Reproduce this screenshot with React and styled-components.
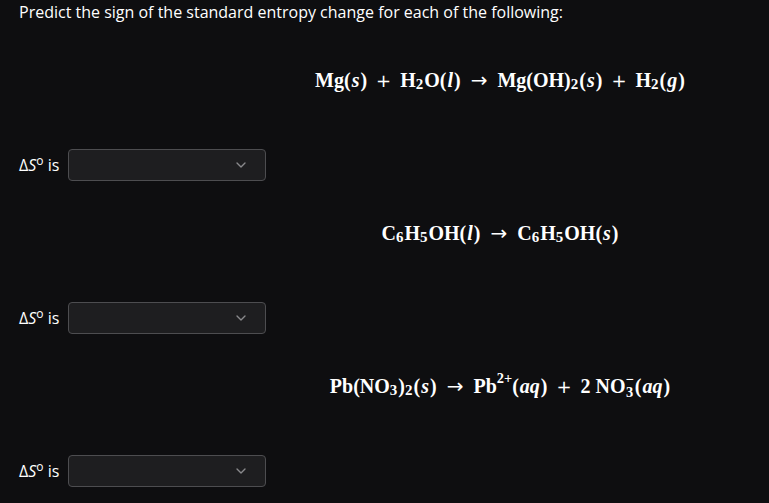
import React from "react";
import styled, { createGlobalStyle } from "styled-components";
import { ChevronDown } from "lucide-react";

const GlobalStyle = createGlobalStyle`
  html, body {
    margin: 0;
    padding: 0;
    background: #0e0e10;
    color: #ffffff;
    font-family: "Open Sans", "Noto Sans", sans-serif;
  }
`;

const Page = styled.div`
  padding: 0 19px;
  width: 769px;
  height: 503px;
  box-sizing: border-box;
  overflow: hidden;
`;

const Title = styled.p`
  margin: 0;
  font-size: 16px;
  line-height: 24px;
  color: #ffffff;
`;

const Question = styled.div`
  display: flex;
  flex-direction: column;
  gap: 54px;
  margin-top: ${(p) => (p.$first ? "41px" : "37px")};
`;

const Equation = styled.div`
  display: flex;
  justify-content: center;
  align-items: center;
  height: 30px;
  padding-left: 231px;
  font-family: "Liberation Serif", "Times New Roman", serif;
  font-weight: bold;
  font-size: 20px;
  white-space: nowrap;
`;

const It = styled.i`
  font-style: italic;
  margin: 0 1px;
`;

const Sub = styled.span`
  font-size: 0.75em;
  position: relative;
  top: 0.3em;
  margin-right: 1px;
`;

const Sup = styled.span`
  font-size: 0.72em;
  position: relative;
  top: -0.5em;
`;

const Stack = styled.span`
  display: inline-flex;
  flex-direction: column;
  align-items: center;
  font-size: 0.72em;
  line-height: 0.9;
  vertical-align: -0.25em;
  margin-right: 1px;
`;

const Op = styled.span`
  margin: 0 0.5em;
  font-family: "DejaVu Sans", sans-serif;
  font-weight: normal;
  font-size: ${(p) => (p.$arrow ? "1em" : "0.9em")};
`;

const Row = styled.div`
  display: flex;
  align-items: center;
  gap: 9px;
  font-size: 16px;
`;

const Label = styled.span`
  white-space: nowrap;
  i {
    font-style: italic;
  }
  sup {
    font-size: 0.75em;
    line-height: 0;
  }
`;

const Select = styled.button`
  display: flex;
  align-items: center;
  justify-content: flex-end;
  width: 198px;
  height: 32px;
  padding: 0 16px 0 8px;
  box-sizing: border-box;
  background: #1e1e20;
  border: 1px solid #4d4d50;
  border-radius: 4px;
  color: #8a8a8c;
  cursor: pointer;
`;

const questions = [
  {
    eq: (
      <>
        Mg(<It>s</It>)<Op>+</Op>H<Sub>2</Sub>O(<It>l</It>)<Op $arrow>→</Op>
        Mg(OH)<Sub>2</Sub>(<It>s</It>)<Op>+</Op>H<Sub>2</Sub>(<It>g</It>)
      </>
    ),
  },
  {
    eq: (
      <>
        C<Sub>6</Sub>H<Sub>5</Sub>OH(<It>l</It>)<Op $arrow>→</Op>C<Sub>6</Sub>H
        <Sub>5</Sub>OH(<It>s</It>)
      </>
    ),
  },
  {
    eq: (
      <>
        Pb(NO<Sub>3</Sub>)<Sub>2</Sub>(<It>s</It>)<Op $arrow>→</Op>Pb
        <Sup>2+</Sup>(<It>aq</It>)<Op>+</Op>2&nbsp;NO
        <Stack>
          <span>−</span>
          <span>3</span>
        </Stack>
        (<It>aq</It>)
      </>
    ),
  },
];

export default function App() {
  return (
    <Page>
      <GlobalStyle />
      <Title>
        Predict the sign of the standard entropy change for each of the
        following:
      </Title>
      {questions.map((q, i) => (
        <Question key={i} $first={i === 0}>
          <Equation>{q.eq}</Equation>
          <Row>
            <Label>
              Δ<i>S</i>
              <sup>o</sup> is
            </Label>
            <Select aria-label="select">
              <ChevronDown size={16} strokeWidth={2} />
            </Select>
          </Row>
        </Question>
      ))}
    </Page>
  );
}
